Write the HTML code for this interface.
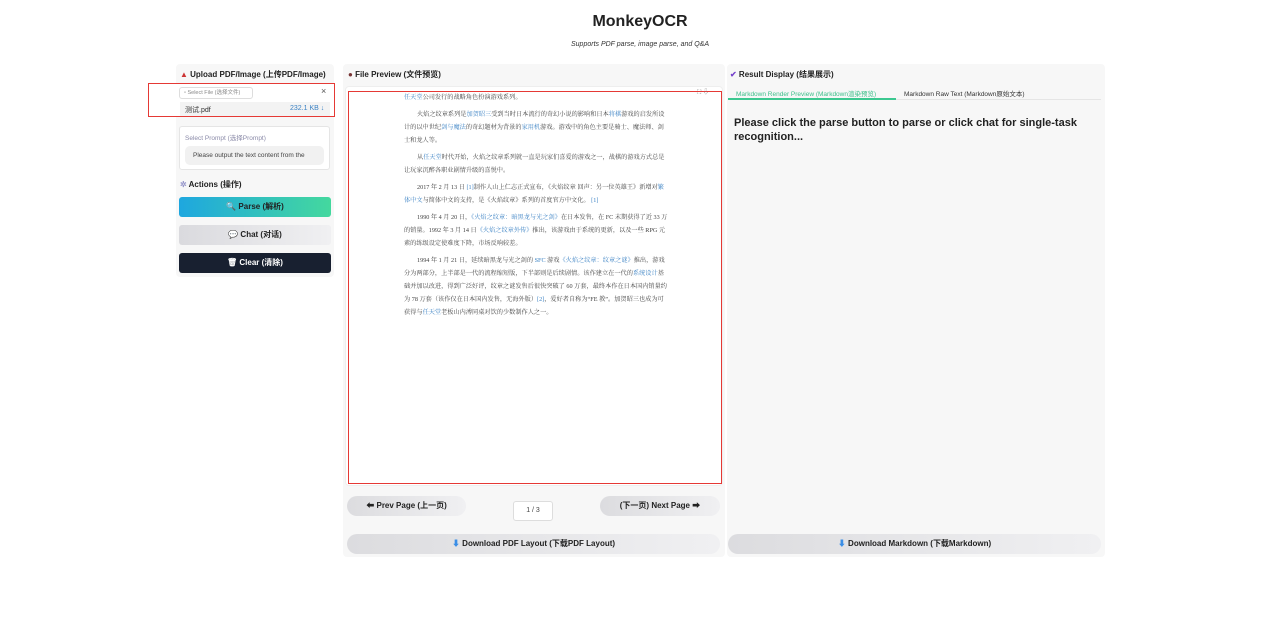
<!DOCTYPE html>
<html><head><meta charset="utf-8">
<style>
*{box-sizing:border-box;margin:0;padding:0}
body{width:1280px;height:644px;background:#fff;font-family:"Liberation Sans","Noto Sans CJK SC",sans-serif;color:#222;position:relative;overflow:hidden}
.abs{position:absolute}
h1{position:absolute;top:13px;left:0;width:1280px;text-align:center;font-size:16px;font-weight:bold;color:#222}
.sub{top:41px;left:0;width:1280px;text-align:center;font-size:7px;font-style:italic;color:#333}
.panel{background:#f7f7f7;border-radius:4px}
.hd{font-size:8px;font-weight:bold;color:#222}
.btn{border-radius:3px;font-size:8px;font-weight:bold;text-align:center;line-height:20px;color:#222}
.pill{border-radius:11px;background:linear-gradient(90deg,#dcdcdf,#f0f0f2);font-size:8px;font-weight:bold;text-align:center;color:#222}
.doc{font-family:"Liberation Serif","Noto Serif CJK SC",serif;font-size:6.2px;line-height:13px;color:#444}
.doc p{text-indent:13px;margin-bottom:4px}
.doc b{color:#3b82c4;font-weight:normal}
</style></head><body>
<h1>MonkeyOCR</h1>
<div class="abs sub">Supports PDF parse, image parse, and Q&amp;A</div>

<div class="abs panel" style="left:176px;top:64px;width:158px;height:213px"></div>
<div class="abs hd" style="left:180px;top:69px"><span style="color:#c33">▲</span> Upload PDF/Image (上传PDF/Image)</div>
<div class="abs" style="left:148px;top:83px;width:187px;height:34px;border:1.5px solid #e53935;background:#fff"></div>
<div class="abs" style="left:179px;top:87px;width:74px;height:12px;border:1px solid #ddd;border-radius:3px;font-size:5.5px;color:#888;line-height:10px;padding-left:4px;background:#fff">▫ Select File (选择文件)</div>
<div class="abs" style="left:321px;top:86px;font-size:9px;color:#555">×</div>
<div class="abs" style="left:180px;top:102px;width:150px;height:14px;background:#f3f3f3"></div>
<div class="abs" style="left:185px;top:105px;font-size:7px;color:#333">测试.pdf</div>
<div class="abs" style="left:290px;top:105px;font-size:7px;color:#3b82c4">232.1 KB ↓</div>

<div class="abs" style="left:179px;top:126px;width:151px;height:44px;background:#fff;border:1px solid #e5e5e5;border-radius:3px"></div>
<div class="abs" style="left:185px;top:132px;font-size:6.5px;color:#8a8aa8">Select Prompt (选择Prompt)</div>
<div class="abs" style="left:185px;top:146px;width:139px;height:19px;background:#f1f1f1;border-radius:5px;font-size:6.5px;line-height:19px;padding-left:8px;color:#444;white-space:nowrap;overflow:hidden">Please output the text content from the</div>

<div class="abs hd" style="left:180px;top:179px"><span style="color:#99c">✲</span> Actions (操作)</div>
<div class="abs btn" style="left:179px;top:197px;width:152px;height:20px;background:linear-gradient(90deg,#1ea7df,#44d89e)">🔍 Parse (解析)</div>
<div class="abs btn" style="left:179px;top:225px;width:152px;height:20px;background:linear-gradient(90deg,#dadade,#f0f0f2)">💬 Chat (对话)</div>
<div class="abs btn" style="left:179px;top:253px;width:152px;height:20px;background:#182030;color:#fff">🗑 Clear (清除)</div>

<div class="abs panel" style="left:343px;top:64px;width:382px;height:493px"></div>
<div class="abs hd" style="left:348px;top:69px"><span style="color:#733">●</span> File Preview (文件预览)</div>
<div class="abs" style="left:345px;top:86px;width:378px;height:400px;background:#fff;border-radius:4px;border:1px solid #eee"></div>
<div class="abs" style="left:348px;top:91px;width:374px;height:393px;border:1.5px solid #e53935;overflow:hidden">
 <div class="doc" style="position:absolute;left:55px;top:-1px;width:264px">
 <p style="text-indent:0"><b>任天堂</b>公司发行的战略角色扮演游戏系列。</p>
 <p>火焰之纹章系列是<b>加贺昭三</b>受到当时日本流行的奇幻小说的影响和日本<b>将棋</b>游戏的启发所设计的以中世纪<b>剑与魔法</b>的奇幻题材为背景的<b>家用机</b>游戏。游戏中的角色主要是骑士、魔法师、剑士和龙人等。</p>
 <p>从<b>任天堂</b>时代开始，火焰之纹章系列就一直是玩家们喜爱的游戏之一，战棋的游戏方式总是让玩家沉醉各职业剧情升级的喜悦中。</p>
 <p>2017 年 2 月 13 日 <b>[1]</b>制作人山上仁志正式宣布，《火焰纹章 回声：另一位英雄王》新增对<b>繁体中文</b>与简体中文的支持，是《火焰纹章》系列的首度官方中文化。 <b>[1]</b></p>
 <p>1990 年 4 月 20 日，<b>《火焰之纹章：暗黑龙与光之剑》</b>在日本发售，在 FC 末期获得了近 33 万的销量。1992 年 3 月 14 日<b>《火焰之纹章外传》</b>推出，该游戏由于系统的更新，以及一些 RPG 元素的练级设定使难度下降，市场反响较差。</p>
 <p>1994 年 1 月 21 日，延续暗黑龙与光之剑的 <b>SFC</b> 游戏<b>《火焰之纹章：纹章之谜》</b>推出，游戏分为两部分，上半部是一代的流程缩短版，下半部则是后续剧情。该作建立在一代的<b>系统设计</b>基础并加以改进，得到广泛好评，纹章之谜发售后很快突破了 60 万套，最终本作在日本国内销量约为 78 万套（该作仅在日本国内发售，无海外版）<b>[2]</b>，爱好者自称为“FE 教”。加贺昭三也成为可获得与<b>任天堂</b>老板山内溥同桌对饮的少数制作人之一。</p>
 </div>
</div>
<div class="abs" style="left:697px;top:87px;font-size:6px;color:#888">⛶ ⇩</div>

<div class="abs pill" style="left:347px;top:496px;width:119px;height:20px;line-height:20px">⬅ Prev Page (上一页)</div>
<div class="abs" style="left:513px;top:501px;width:40px;height:20px;background:#fff;border:1px solid #ddd;border-radius:3px;font-size:7px;text-align:center;line-height:18px;color:#444">1 / 3</div>
<div class="abs pill" style="left:600px;top:496px;width:120px;height:20px;line-height:20px">(下一页) Next Page ➡</div>
<div class="abs pill" style="left:347px;top:534px;width:373px;height:20px;line-height:20px"><span style="color:#3a8ee6">⬇</span> Download PDF Layout (下载PDF Layout)</div>

<div class="abs panel" style="left:727px;top:64px;width:378px;height:493px"></div>
<div class="abs hd" style="left:730px;top:69px"><span style="color:#74c">✔</span> Result Display (结果展示)</div>
<div class="abs" style="left:736px;top:88px;font-size:6.5px;color:#3cbf8a">Markdown Render Preview (Markdown渲染预览)</div>
<div class="abs" style="left:728px;top:98px;width:168px;height:2px;background:#3cc890"></div>
<div class="abs" style="left:904px;top:88px;font-size:6.5px;color:#333">Markdown Raw Text (Markdown原始文本)</div>
<div class="abs" style="left:896px;top:99px;width:205px;height:1px;background:#e5e5e5"></div>
<div class="abs" style="left:734px;top:116px;width:360px;font-size:11px;font-weight:bold;line-height:14px;color:#222">Please click the parse button to parse or click chat for single-task recognition...</div>
<div class="abs pill" style="left:728px;top:534px;width:373px;height:20px;line-height:20px"><span style="color:#3a8ee6">⬇</span> Download Markdown (下载Markdown)</div>
</body></html>
